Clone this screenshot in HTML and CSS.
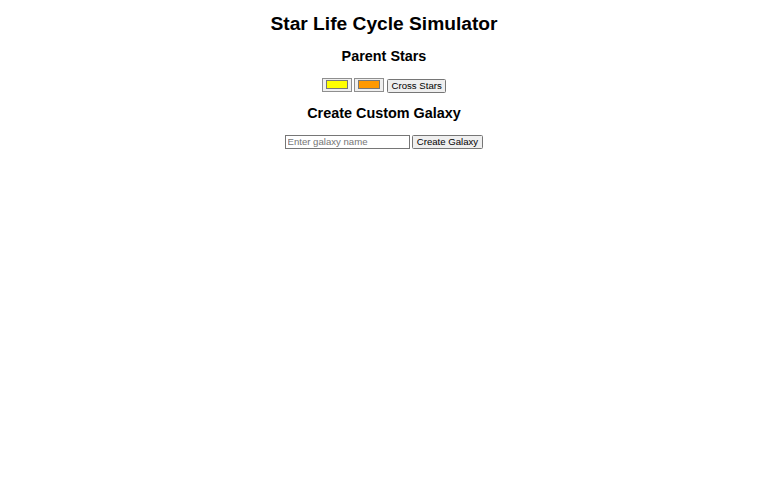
FILE: index.html
```html
<!DOCTYPE html>
<html lang="en">
<head>
<meta charset="utf-8">
<title>Star Life Cycle Simulator</title>
<link rel="stylesheet" href="styles.css">
</head>
<body>
<main class="page">
  <h1 class="title">Star Life Cycle Simulator</h1>
  <section class="section">
    <h2 class="heading">Parent Stars</h2>
    <div class="controls">
      <input class="star-color" type="color" value="#ffff00" aria-label="Parent star 1">
      <input class="star-color" type="color" value="#ff9900" aria-label="Parent star 2">
      <button class="btn" type="button">Cross Stars</button>
    </div>
  </section>
  <section class="section">
    <h2 class="heading">Create Custom Galaxy</h2>
    <div class="controls">
      <input class="text-field" type="text" placeholder="Enter galaxy name">
      <button class="btn" type="button">Create Galaxy</button>
    </div>
  </section>
</main>
</body>
</html>
```

FILE: styles.css
```css
html, body {
  margin: 0;
  background: #ffffff;
}

.page {
  zoom: 0.6;
  font-family: "Liberation Sans", Arial, sans-serif;
  font-size: 16px;
  color: #000000;
  text-align: center;
}

.title {
  font-size: 32px;
  font-weight: bold;
  margin: 21.44px 0;
}

.heading {
  font-size: 24px;
  font-weight: bold;
  margin: 19.92px 0;
}

.controls {
  margin: 0;
  padding-top: 3.4px;
}

.star-color {
  width: 50px;
  height: 24px;
  padding: 1px 2px;
  border: 1px solid #8f8f8f;
  background: #efefef;
  font-size: 16px;
}

.star-color::-webkit-color-swatch-wrapper {
  padding: 2px 3px;
}

.star-color::-webkit-color-swatch {
  border: 1px solid #777777;
}

.btn {
  font-family: "Liberation Sans", Arial, sans-serif;
  font-size: 16px;
  padding: 1px 6px;
  color: #000000;
}

.text-field {
  font-family: "Liberation Sans", Arial, sans-serif;
  font-size: 16px;
  width: 207px;
  box-sizing: border-box;
  padding: 1px 2px;
}

.text-field::placeholder {
  color: #757575;
}
```
